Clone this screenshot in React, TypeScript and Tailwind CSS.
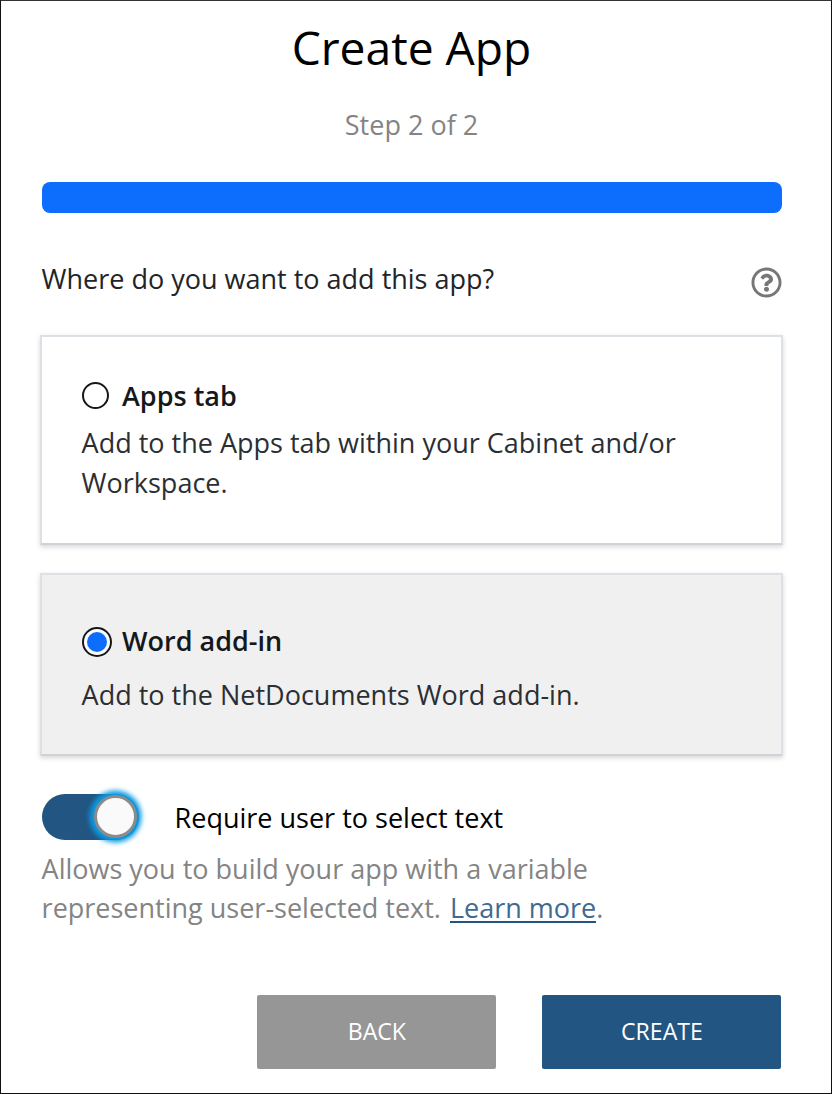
import { FaRegQuestionCircle } from "react-icons/fa";

export default function App() {
  return (
    <div className="flex h-[1094px] w-[832px] flex-col border border-[#111] border-t-[#333] bg-white pl-[39px] pr-[48px] font-['Open_Sans','Noto_Sans',sans-serif] text-[27px] text-[#212529]">
      <h1 className="mt-[17px] h-[60px] px-px text-center text-[46.2px] leading-[60px] whitespace-nowrap text-black">Create App</h1>
      <p className="mt-[27px] h-[40px] px-px text-center leading-[40px] whitespace-nowrap text-[#848484]">Step 2 of 2</p>
      <div className="mr-px ml-[1.6px] mt-[37px] h-[31px] shrink-0 rounded-[8px] bg-[#0d6efd]" />

      <div className="mt-[46px] flex h-[40px] shrink-0 items-start justify-between pr-px pl-[1.6px]">
        <span className="leading-[40px] whitespace-nowrap">Where do you want to add this app?</span>
        <FaRegQuestionCircle className="mt-[8px] size-[31px] text-[#777]" />
      </div>

      <div className="mt-[36px] h-[210px] shrink-0 border-2 border-[#dde1e6] border-b-[#cfd2d7] bg-white px-[40px] pt-[38px] shadow-[0_2px_5px_rgba(0,0,0,0.16)]">
        <div className="flex h-[40px] items-center">
          <span className="size-[27px] rounded-full border-2 border-[#15181b]" />
          <span className="ml-[13px] font-semibold leading-[41px] whitespace-nowrap text-[#15181b]">Apps tab</span>
        </div>
        <p className="mt-[8px] -ml-[0.4px] leading-[39.7px] whitespace-nowrap text-[#2b2f33]">
          Add to the Apps tab within your Cabinet and/or
          <br />
          Workspace.
        </p>
      </div>

      <div className="mt-[28px] h-[183px] shrink-0 border-2 border-[#dde1e6] border-b-[#cfd2d7] bg-[#f0f0f0] px-[40px] pt-[47px] shadow-[0_2px_5px_rgba(0,0,0,0.16)]">
        <div className="flex h-[40px] items-center">
          <span className="flex size-[30px] items-center justify-center rounded-full border-2 border-[#15181b] bg-white">
            <span className="size-[20px] rounded-full bg-[#0d6efd]" />
          </span>
          <span className="ml-[10px] pb-[2px] font-semibold whitespace-nowrap text-[#15181b]">Word add-in</span>
        </div>
        <p className="mt-[13px] -ml-[0.4px] leading-[40px] whitespace-nowrap text-[#2b2f33]">Add to the NetDocuments Word add-in.</p>
      </div>

      <div className="mt-[37px] flex h-[47px] shrink-0 items-center pl-[1.6px]">
        <span className="flex h-[46px] w-[97px] items-center justify-end rounded-full bg-[#225581] pr-[2px]">
          <span className="size-[43px] rounded-full border-[3px] border-[#8b8b8b] bg-[#fafafa] shadow-[0_0_5px_4.5px_#0c9be4]" />
        </span>
        <span className="ml-[36px] pt-[2px] leading-[40px] whitespace-nowrap text-black">Require user to select text</span>
      </div>
      <p className="mt-[10px] h-[78px] shrink-0 pl-[1.6px] leading-[38.6px] whitespace-nowrap text-[#848484]">
        Allows you to build your app with a variable
        <br />
        representing user-selected text.{" "}
        <a className="ml-[2px] inline-block h-[34px] border-b-2 border-[#225581] align-top text-[#416a92]">Learn more</a>
        <span className="text-[#777]">.</span>
      </p>

      <div className="mt-[67px] flex justify-end gap-[46px] pr-[1.6px] text-[23.1px] text-white">
        <button className="h-[74px] w-[239px] rounded-[2px] bg-[#969696] pb-[2px]">BACK</button>
        <button className="h-[74px] w-[239px] rounded-[2px] bg-[#225581] pb-[2px]">CREATE</button>
      </div>
    </div>
  );
}
